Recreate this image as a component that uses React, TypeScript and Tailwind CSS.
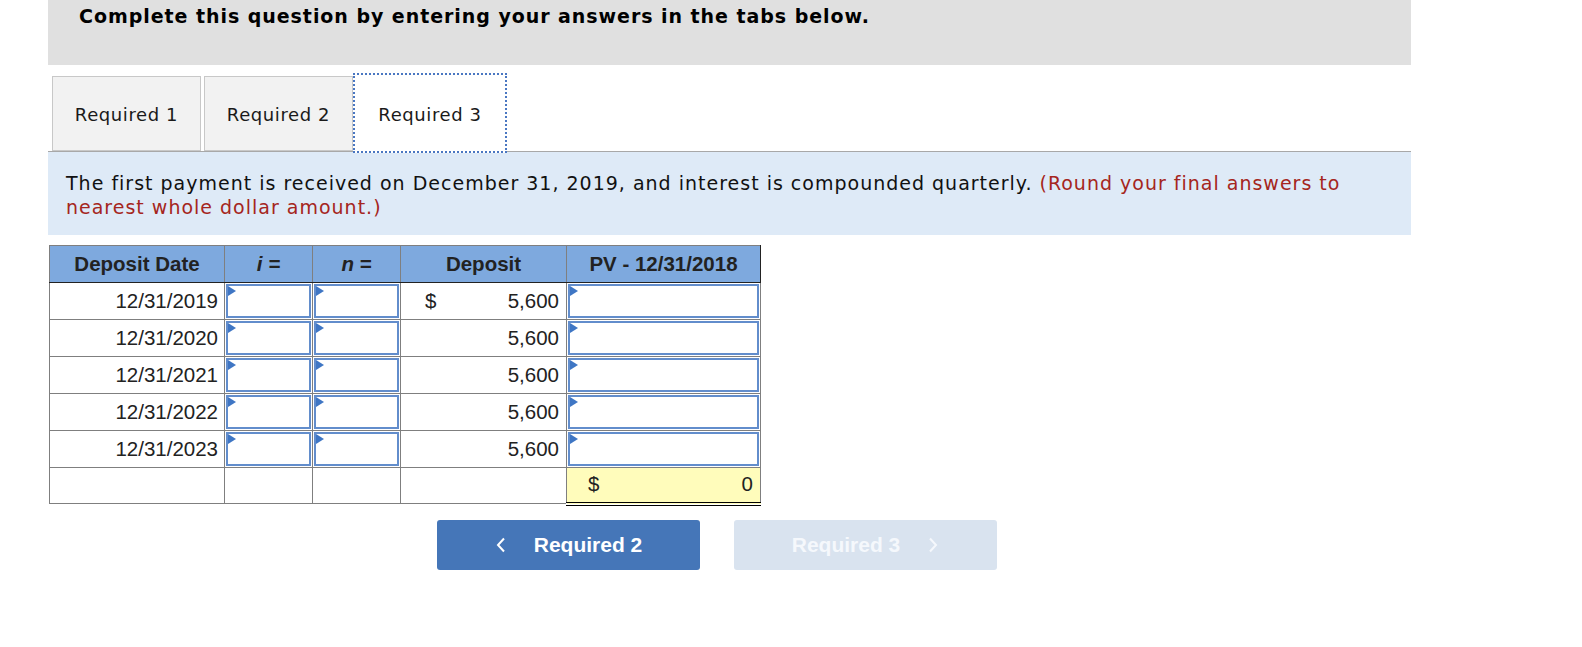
import React from "react";

const dates = ["12/31/2019", "12/31/2020", "12/31/2021", "12/31/2022", "12/31/2023"];

function Tri() {
  return (
    <svg className="absolute left-0 top-0" width="8" height="10" viewBox="0 0 8 10">
      <polygon points="0,0 8,5 0,10" fill="#3f76c4" />
    </svg>
  );
}

function InputBox() {
  return (
    <div className="relative h-[34px] w-full border-2 border-[#628dcc] bg-white">
      <Tri />
    </div>
  );
}

export default function App() {
  return (
    <div className="min-h-[647px] w-[1582px] bg-white">
      <div className="ml-[48px] w-[1363px]">
        {/* Header */}
        <div className="h-[65px] bg-[#e0e0e0] pl-[31px] pt-[4px]">
          <div className="font-['DejaVu_Sans',sans-serif] text-[19px] font-bold leading-[24px] tracking-[0.95px] text-black">
            Complete this question by entering your answers in the tabs below.
          </div>
        </div>

        {/* Tabs */}
        <div className="mt-[8px] flex h-[78px] items-end pl-[4px] font-['DejaVu_Sans',sans-serif] text-[18px] tracking-[0.6px] text-[#1a1a1a]">
          <div className="flex h-[75px] w-[149px] items-center justify-center border border-[#c8c8c8] bg-[#f2f2f2] pt-[2px]">
            Required 1
          </div>
          <div className="ml-[3px] flex h-[75px] w-[149px] items-center justify-center border border-[#c8c8c8] bg-[#f2f2f2] pt-[2px]">
            Required 2
          </div>
          <div className="relative z-10 -mb-[2px] flex h-[80px] w-[154px] items-center justify-center border-2 border-dotted border-[#4a77c2] bg-white pt-[2px]">
            Required 3
          </div>
        </div>

        {/* Info */}
        <div className="border-t border-[#a8a8a8] bg-[#deeaf7] pb-[16px] pl-[18px] pr-[60px] pt-[19px] font-['DejaVu_Sans',sans-serif] text-[19px] leading-[24px] tracking-[1px] text-[#111]">
          <span>The first payment is received on December 31, 2019, and interest is compounded quarterly.</span>{" "}
          <span className="text-[#a52520]">(Round your final answers to nearest whole dollar amount.)</span>
        </div>

        {/* Table */}
        <table className="ml-[1px] mt-[10px] w-[711px] table-fixed border-collapse font-['Liberation_Sans',Arial,sans-serif] text-[20.5px] text-[#222]">
          <colgroup>
            <col className="w-[175px]" />
            <col className="w-[88px]" />
            <col className="w-[88px]" />
            <col className="w-[166px]" />
            <col className="w-[194px]" />
          </colgroup>
          <thead>
            <tr className="h-[37px] bg-[#7ea9de] font-bold">
              <th className="border border-[#7f7f7f] border-b-[#222] p-0 text-center font-bold">Deposit Date</th>
              <th className="border border-[#7f7f7f] border-b-[#222] p-0 text-center font-bold italic">i =</th>
              <th className="border border-[#7f7f7f] border-b-[#222] p-0 text-center font-bold italic">n =</th>
              <th className="border border-[#7f7f7f] border-b-[#222] p-0 text-center font-bold">Deposit</th>
              <th className="border border-[#7f7f7f] border-b-[#222] border-r-[#222] p-0 text-center font-bold">PV - 12/31/2018</th>
            </tr>
          </thead>
          <tbody>
            {dates.map((d, idx) => (
              <tr key={d} className="h-[37px]">
                <td className="border border-[#7f7f7f] p-0 pr-[6px] text-right">{d}</td>
                <td className="border border-[#7f7f7f] p-[1px]">
                  <InputBox />
                </td>
                <td className="border border-[#7f7f7f] p-[1px]">
                  <InputBox />
                </td>
                <td className="border border-[#7f7f7f] p-0 pl-[24px] pr-[7px]">
                  <div className="flex items-center justify-between">
                    <span>{idx === 0 ? "$" : ""}</span>
                    <span>5,600</span>
                  </div>
                </td>
                <td className="border border-[#7f7f7f] p-[1px]">
                  <InputBox />
                </td>
              </tr>
            ))}
            <tr className="h-[36px]">
              <td className="border border-[#7f7f7f] p-0"></td>
              <td className="border border-[#7f7f7f] p-0"></td>
              <td className="border border-[#7f7f7f] p-0"></td>
              <td className="border border-[#7f7f7f] p-0"></td>
              <td className="border border-[#7f7f7f] border-b-[4px] border-b-black border-double bg-[#fffcbb] p-0 pl-[21px] pr-[7px]">
                <div className="flex items-center justify-between">
                  <span>$</span>
                  <span>0</span>
                </div>
              </td>
            </tr>
          </tbody>
        </table>

        {/* Buttons */}
        <div className="ml-[389px] mt-[14px] flex gap-[34px] font-['Liberation_Sans',Arial,sans-serif] text-[21px] font-bold text-white">
          <div className="flex h-[50px] w-[263px] items-center justify-center gap-[27px] rounded-[3px] bg-[#4576b8]">
            <svg width="12" height="16" viewBox="0 0 12 16">
              <polyline points="9,1.5 3,8 9,14.5" fill="none" stroke="white" strokeWidth="2" />
            </svg>
            <span>Required 2</span>
          </div>
          <div className="flex h-[50px] w-[263px] items-center justify-center gap-[27px] rounded-[3px] bg-[#d9e3ef] text-[#f5f8fc]">
            <span>Required 3</span>
            <svg width="12" height="16" viewBox="0 0 12 16">
              <polyline points="3,1.5 9,8 3,14.5" fill="none" stroke="#f5f8fc" strokeWidth="2" />
            </svg>
          </div>
        </div>
      </div>
    </div>
  );
}
